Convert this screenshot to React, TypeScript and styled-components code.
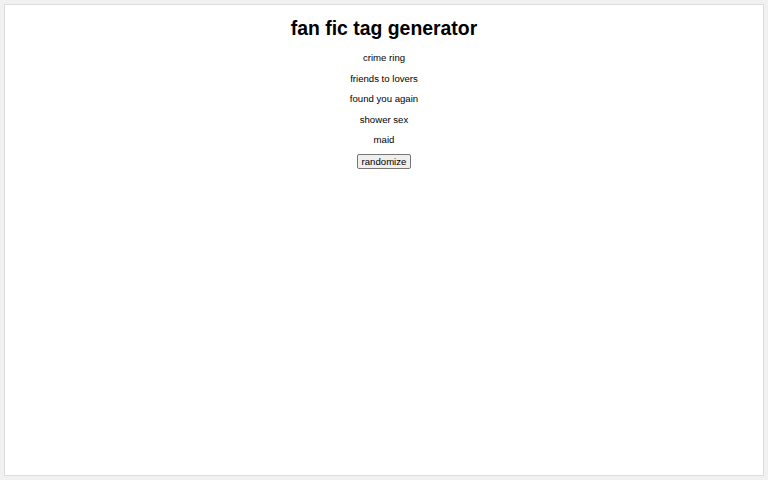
import React, { useState } from "react";
import styled, { createGlobalStyle } from "styled-components";

const Global = createGlobalStyle`
  html, body { margin: 0; padding: 0; background: #f1f1f1; }
  body { font-family: "Liberation Sans", Arial, sans-serif; color: #000; }
`;

const Page = styled.div`
  padding: 4px;
  height: 480px;
  box-sizing: border-box;
  display: flex;
`;

const Card = styled.main`
  flex: 1;
  background: #fff;
  border: 1px solid #dcdcdc;
  display: flex;
  flex-direction: column;
  align-items: center;
  padding-top: 11px;
`;

const Title = styled.h1`
  margin: 0 0 8px;
  font-size: 19.4px;
  font-weight: bold;
  line-height: 24px;
`;

const Tag = styled.p`
  margin: 0;
  font-size: 9.6px;
  line-height: 20.5px;
`;

const Button = styled.button`
  margin-top: 3px;
  font-family: "Liberation Sans", Arial, sans-serif;
  font-size: 9.6px;
  padding: 1px 4px;
  background: #efefef;
  border: 1px solid #767676;
  border-radius: 2px;
`;

const pool = [
  "crime ring",
  "friends to lovers",
  "found you again",
  "shower sex",
  "maid",
  "enemies to lovers",
  "slow burn",
  "fake dating",
  "hurt/comfort",
  "coffee shop au",
];

export default function App() {
  const [tags, setTags] = useState(pool.slice(0, 5));
  const shuffle = () => {
    const copy = [...pool].sort(() => Math.random() - 0.5);
    setTags(copy.slice(0, 5));
  };
  return (
    <>
      <Global />
      <Page>
        <Card>
          <Title>fan fic tag generator</Title>
          {tags.map((t) => (
            <Tag key={t}>{t}</Tag>
          ))}
          <Button onClick={shuffle}>randomize</Button>
        </Card>
      </Page>
    </>
  );
}
